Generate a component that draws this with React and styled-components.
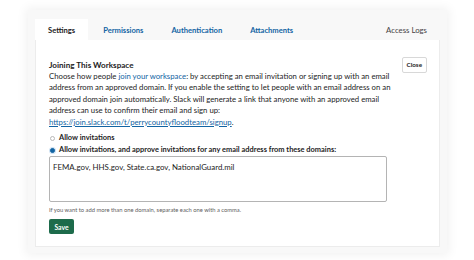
import React from "react"
import styled, { createGlobalStyle } from "styled-components"

const Global = createGlobalStyle`
  html, body {
    margin: 0;
    padding: 0;
    background: #ffffff;
  }
  body {
    font-family: Lato, "Noto Sans", sans-serif;
    color: #1d1c1d;
  }
`

const Page = styled.div`
  width: 474px;
  height: 260px;
  box-sizing: border-box;
  padding: 10px 27px 0 28px;
`

const Frame = styled.div`
  background: #f8f8f8;
  box-shadow: 0 0 10px 2px rgba(0, 0, 0, 0.06);
  padding: 9px 7px 6px 7px;
`

const TabBar = styled.div`
  display: flex;
  align-items: stretch;
  height: 21px;
`

const Tab = styled.div`
  display: flex;
  align-items: center;
  padding: 1px 13px 0 13px;
  margin-right: 2px;
  font-size: 7.6px;
  font-weight: 700;
  color: ${(p) => (p.$active ? "#1d1c1d" : "#1264a3")};
  background: ${(p) => (p.$active ? "#ffffff" : "transparent")};
`

const Spacer = styled.div`
  flex: 1;
`

const Logs = styled(Tab)`
  color: #454245;
  font-weight: 400;
  font-size: 7.8px;
  margin-right: 0;
`

const Panel = styled.div`
  background: #ffffff;
  border: 1px solid #ececec;
  border-top: none;
  padding: 19px 13px 12px 13px;
`

const HeadRow = styled.div`
  display: flex;
  justify-content: space-between;
  align-items: flex-start;
  height: 12px;
`

const Title = styled.div`
  font-size: 8.1px;
  font-weight: 700;
  line-height: 12px;
`

const CloseButton = styled.button`
  font-family: inherit;
  font-size: 6.3px;
  font-weight: 700;
  color: #1d1c1d;
  background: #ffffff;
  border: 1px solid #d8d8d8;
  border-radius: 2px;
  padding: 3px 4px;
  line-height: 8px;
  margin-top: -2px;
  margin-right: -1px;
`

const Text = styled.p`
  margin: 0;
  font-size: 7.75px;
  line-height: 11.4px;
  width: 345px;
  color: #1d1c1d;
`

const TextLink = styled.a`
  color: #1264a3;
  text-decoration: ${(p) => (p.$under ? "underline" : "none")};
`

const Options = styled.div`
  margin-top: 5px;
  display: flex;
  flex-direction: column;
  gap: 2px;
`

const Option = styled.label`
  display: flex;
  align-items: center;
  gap: 3px;
  font-size: 7.45px;
  font-weight: 700;
  line-height: 10px;
`

const Radio = styled.span`
  width: 5px;
  height: 5px;
  border-radius: 50%;
  box-sizing: border-box;
  border: 1px solid ${(p) => (p.$on ? "#1264a3" : "#b8b8b8")};
  background: ${(p) => (p.$on ? "#1264a3" : "#fff")};
  box-shadow: ${(p) => (p.$on ? "0 0 0 1px #cfe2f3" : "none")};
  margin: 0 1px;
`

const Domains = styled.div`
  margin-top: 1px;
  width: 338px;
  height: 46px;
  box-sizing: border-box;
  border: 1px solid #b4b4b4;
  border-radius: 2px;
  padding: 5px 3px;
  font-size: 7.9px;
  line-height: 10px;
`

const Hint = styled.div`
  margin-top: 3px;
  font-size: 5.8px;
  color: #616061;
  line-height: 9px;
`

const SaveButton = styled.button`
  display: block;
  margin-top: 5px;
  font-family: inherit;
  font-size: 6.8px;
  font-weight: 700;
  color: #ffffff;
  background: #1d6b4b;
  border: none;
  border-radius: 2px;
  width: 25px;
  height: 15px;
  padding: 0;
`

export default function App() {
  return (
    <>
      <Global />
      <Page>
        <Frame>
          <TabBar>
            <Tab $active>Settings</Tab>
            <Tab>Permissions</Tab>
            <Tab>Authentication</Tab>
            <Tab>Attachments</Tab>
            <Spacer />
            <Logs>Access Logs</Logs>
          </TabBar>
          <Panel>
            <HeadRow>
              <Title>Joining This Workspace</Title>
              <CloseButton>Close</CloseButton>
            </HeadRow>
            <Text>
              Choose how people <TextLink>join your workspace</TextLink>: by
              accepting an email invitation or signing up with an email address
              from an approved domain. If you enable the setting to let people
              with an email address on an approved domain join automatically.
              Slack will generate a link that anyone with an approved email
              address can use to confirm their email and sign up:{" "}
              <TextLink $under>
                https://join.slack.com/t/perrycountyfloodteam/signup
              </TextLink>
              .
            </Text>
            <Options>
              <Option>
                <Radio />
                Allow invitations
              </Option>
              <Option>
                <Radio $on />
                Allow invitations, and approve invitations for any email address
                from these domains:
              </Option>
            </Options>
            <Domains>FEMA.gov, HHS.gov, State.ca.gov, NationalGuard.mil</Domains>
            <Hint>
              If you want to add more than one domain, separate each one with a
              comma.
            </Hint>
            <SaveButton>Save</SaveButton>
          </Panel>
        </Frame>
      </Page>
    </>
  )
}
